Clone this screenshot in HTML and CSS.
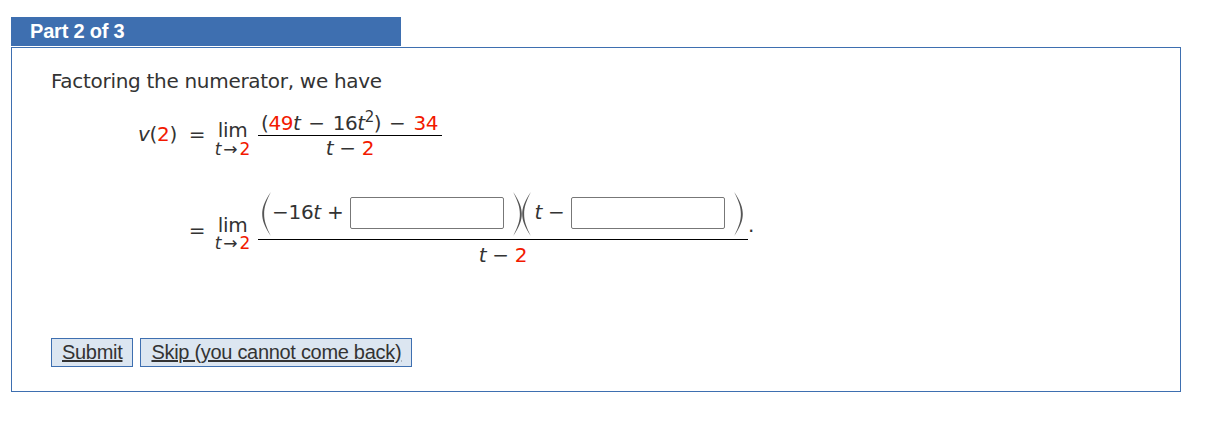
FILE: index.html
```html
<!DOCTYPE html>
<html lang="en">
<head>
    <meta charset="UTF-8">
    <title>Part 2 of 3</title>
    <link rel="stylesheet" href="styles.css">
</head>
<body>
    <div class="part-title">Part 2 of 3</div>
    <div class="panel">
        <p class="intro">Factoring the numerator, we have</p>

        <!-- first line of the limit -->
        <div class="math-row first">
            <div class="lhs"><i>v</i>(<span class="red">2</span>)</div>
            <div class="equals">=</div>
            <div class="limit">
                <div class="lim">lim</div>
                <div class="under"><i>t</i><span class="arrow">→</span><span class="red">2</span></div>
            </div>
            <div class="fraction first-frac">
                <div class="top">(<span class="red">49</span><i>t</i><span class="op">−</span>16<i>t</i><sup>2</sup>)<span class="op">−</span><span class="red">34</span></div>
                <div class="bottom"><i>t</i><span class="op">−</span><span class="red">2</span></div>
            </div>
        </div>

        <!-- second line with the answer boxes -->
        <div class="math-row second">
            <div class="lhs"></div>
            <div class="equals">=</div>
            <div class="limit">
                <div class="lim">lim</div>
                <div class="under"><i>t</i><span class="arrow">→</span><span class="red">2</span></div>
            </div>
            <div class="fraction second-frac">
                <div class="top boxes">
                    <svg class="paren" viewBox="0 0 10 46"><path d="M9 0C2 10 0 17 0 23s2 13 9 23C4 36 2 30 2 23S4 10 9 0z"/></svg>
                    <span class="term">−16<i>t</i> +</span>
                    <input type="text" class="answer">
                    <svg class="paren" viewBox="0 0 10 46"><path d="M1 0c7 10 9 17 9 23s-2 13-9 23c5-10 7-16 7-23S6 10 1 0z"/></svg>
                    <svg class="paren" viewBox="0 0 10 46"><path d="M9 0C2 10 0 17 0 23s2 13 9 23C4 36 2 30 2 23S4 10 9 0z"/></svg>
                    <span class="term term-short"><i>t</i> −</span>
                    <input type="text" class="answer">
                    <svg class="paren" viewBox="0 0 10 46"><path d="M1 0c7 10 9 17 9 23s-2 13-9 23c5-10 7-16 7-23S6 10 1 0z"/></svg>
                </div>
                <div class="bottom"><i>t</i><span class="op">−</span><span class="red">2</span></div>
            </div>
            <div class="period">.</div>
        </div>

        <div class="button-row">
            <button class="button">Submit</button>
            <button class="button">Skip (you cannot come back)</button>
        </div>
    </div>
</body>
</html>
```

FILE: styles.css
```css
body {
    margin: 0;
    padding: 17px 11px 0;
    background-color: #fff;
    color: #333;
    font-family: "DejaVu Sans", Verdana, sans-serif;
    font-size: 20px;
    letter-spacing: -0.3px;
}
.part-title {
    width: 371px;
    height: 29px;
    padding-left: 19px;
    background-color: #3e6fb0;
    color: #fff;
    font-family: "Liberation Sans", Arial, sans-serif;
    font-size: 20px;
    font-weight: bold;
    letter-spacing: -0.2px;
    line-height: 28px;
}
.panel {
    box-sizing: border-box;
    width: 1170px;
    height: 345px;
    margin-top: 1px;
    padding: 21px 39px 0;
    border: 1px solid #3e6fb0;
}
.intro {
    margin: 0;
    line-height: 24px;
}
.red {
    color: #f21900;
}
.math-row {
    display: flex;
    align-items: flex-start;
}
.math-row.first {
    margin-top: 17px;
    height: 71px;
}
.math-row.second {
    height: 157px;
}
.lhs {
    width: 126px;
    text-align: right;
    line-height: 24px;
    margin-top: 12px;
}
.equals {
    width: 40px;
    text-align: center;
    line-height: 24px;
}
.first .equals {
    margin-top: 12px;
}
.second .equals {
    margin-top: 37px;
}
.limit {
    width: 41px;
    text-align: center;
}
.first .limit {
    margin-top: 9px;
}
.second .limit {
    margin-top: 33px;
}
.lim {
    line-height: 22px;
    margin-left: -10px;
}
.under {
    font-size: 17px;
    letter-spacing: 0;
    line-height: 15px;
    margin-left: -10px;
    white-space: nowrap;
}
.first .under {
    margin-top: 1px;
}
.arrow {
    margin: 0 2px;
}
.fraction {
    text-align: center;
    white-space: nowrap;
}
.first-frac {
    width: 184px;
}
.second-frac {
    width: 490px;
    margin-top: 11px;
}
.top {
    border-bottom: 1px solid #000;
    line-height: 26px;
}
.first-frac .top {
    height: 25px;
    padding-right: 1px;
    letter-spacing: -0.45px;
}
.top sup {
    font-size: 15px;
    line-height: 0;
}
.bottom {
    line-height: 24px;
}
.second-frac .bottom {
    margin-top: 3px;
}
.op {
    margin: 0 8px;
}
.bottom .op {
    margin: 0 6px;
}
.boxes {
    display: flex;
    align-items: flex-start;
    height: 47px;
    padding-left: 4px;
}
.paren {
    width: 10px;
    height: 44px;
    flex-shrink: 0;
}
.paren path {
    fill: #555;
}
.term {
    line-height: 24px;
    margin-top: 8px;
}
.term-short {
    margin-left: 2px;
}
.answer {
    box-sizing: border-box;
    width: 154px;
    height: 32px;
    margin: 5px 8px 0 7px;
    padding: 0;
    border: 1px solid #777;
    border-radius: 2px;
    background-color: #fff;
}
.period {
    margin-top: 32px;
    line-height: 24px;
}
.button-row {
    display: flex;
    gap: 7px;
}
.button {
    box-sizing: border-box;
    height: 29px;
    padding: 0 10px;
    background-color: #dce6f1;
    border: 1px solid #3e6fb0;
    border-radius: 0;
    color: #333;
    font-family: "Liberation Sans", Arial, sans-serif;
    font-size: 20px;
    text-decoration: underline;
    letter-spacing: -0.3px;
    cursor: pointer;
}
```
